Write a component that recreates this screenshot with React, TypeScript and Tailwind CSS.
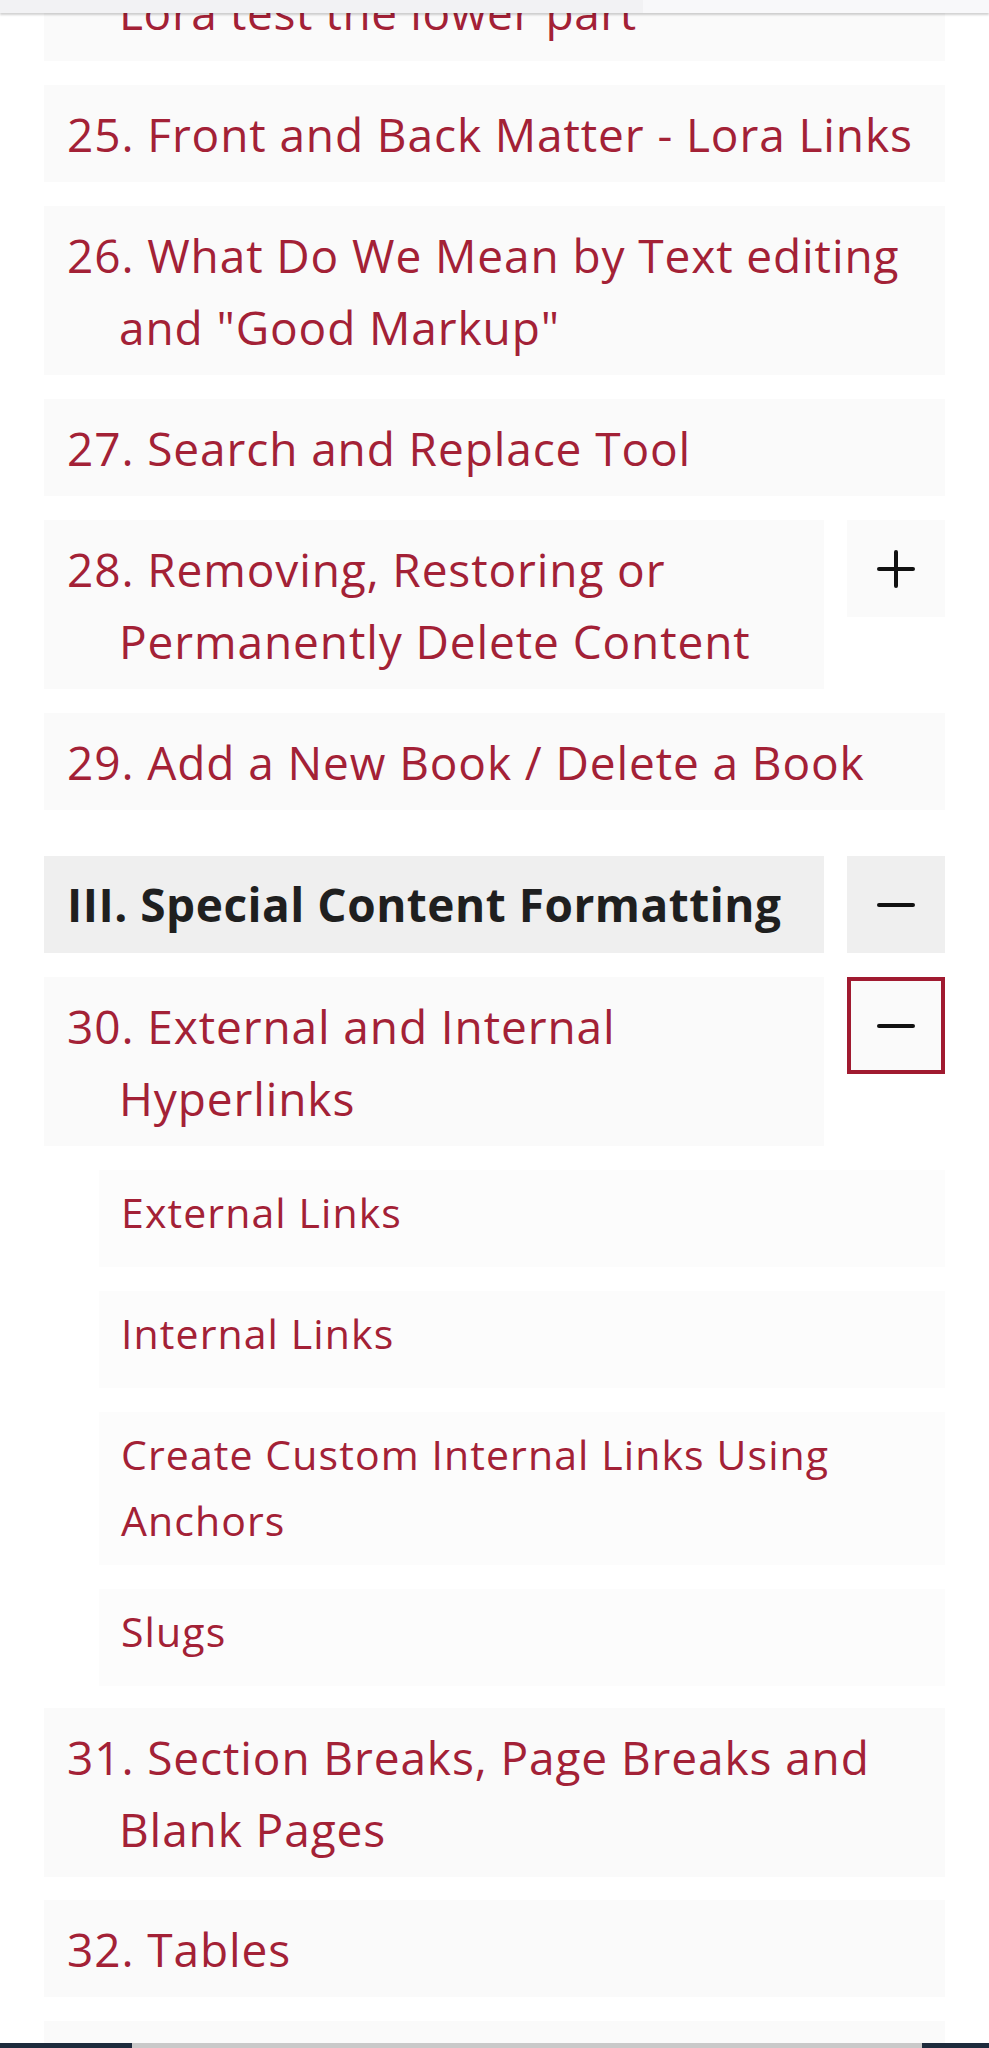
import React from 'react'

const red = 'text-[#a32136]'

function Toggle({ open, active }: { open: boolean; active?: boolean }) {
  return (
    <button
      className={`flex h-[97px] w-[98px] shrink-0 items-center justify-center ${
        active ? 'border-[4px] border-[#a01a30] bg-[#fafafa]' : open ? 'bg-[#efefef]' : 'bg-[#fafafa]'
      }`}
    >
      <svg width="38" height="38" viewBox="0 0 38 38" fill="none" stroke="#111" strokeWidth="4" strokeLinecap="round">
        <path d="M2 19h34" />
        {!open && <path d="M19 2v34" />}
      </svg>
    </button>
  )
}

function Lines({ lines }: { lines: string[] }) {
  return (
    <>
      {lines.map((l, i) => (
        <React.Fragment key={i}>
          {i > 0 && <br />}
          {l}
        </React.Fragment>
      ))}
    </>
  )
}

function Chapter({ lines, wide = true }: { lines: string[]; wide?: boolean }) {
  return (
    <div className={`bg-[#fafafa] pt-[13px] pb-[12px] pl-[75px] pr-[20px] ${wide ? 'w-full' : 'flex-1'}`}>
      <a className={`block [text-indent:-52px] text-[46px] leading-[72px] tracking-[0.9px] ${red}`}>
        <Lines lines={lines} />
      </a>
    </div>
  )
}

function Section({ lines }: { lines: string[] }) {
  return (
    <div className="ml-[55px] min-h-[97px] bg-[#fcfcfc] pt-[9px] pb-[12px] pl-[22px] pr-[20px]">
      <a className={`block text-[41px] leading-[66px] tracking-[1.1px] ${red}`}>
        <Lines lines={lines} />
      </a>
    </div>
  )
}

export default function App() {
  return (
    <div className="relative h-[2048px] overflow-hidden bg-white" style={{ fontFamily: '"Open Sans", "Liberation Sans", sans-serif' }}>
      {/* fixed bar at top */}
      <div className="absolute inset-x-0 top-0 z-10 flex h-[13px] shadow-[0_2px_2px_rgba(0,0,0,0.18)]">
        <div className="w-[643px] bg-[#f2f2f4]" />
        <div className="flex-1 bg-[#f8f8fa]" />
      </div>

      <div className="mx-[44px] flex flex-col gap-[24px]">
        <div className="h-[61px] overflow-hidden bg-[#fafafa] pl-[75px]">
          <div className={`-mt-[24px] whitespace-nowrap text-[46px] leading-[72px] tracking-[0.6px] ${red}`}>Lora test the lower part</div>
        </div>

        <Chapter lines={['25. Front and Back Matter - Lora Links']} />
        <Chapter lines={['26. What Do We Mean by Text editing', 'and "Good Markup"']} />
        <Chapter lines={['27. Search and Replace Tool']} />

        <div className="flex gap-[23px]">
          <Chapter wide={false} lines={['28. Removing, Restoring or', 'Permanently Delete Content']} />
          <Toggle open={false} />
        </div>

        <Chapter lines={['29. Add a New Book / Delete a Book']} />

        <div className="mt-[22px] flex gap-[23px]">
          <div className="flex h-[97px] flex-1 items-center bg-[#efefef] pl-[23px]">
            <span className="text-[46px] font-bold tracking-[0.5px] text-[#1f1f1f]">III. Special Content Formatting</span>
          </div>
          <Toggle open />
        </div>

        <div className="flex gap-[23px]">
          <Chapter wide={false} lines={['30. External and Internal', 'Hyperlinks']} />
          <Toggle open active />
        </div>

        <Section lines={['External Links']} />
        <Section lines={['Internal Links']} />
        <Section lines={['Create Custom Internal Links Using', 'Anchors']} />
        <Section lines={['Slugs']} />

        <div className="-mt-[2px]">
          <Chapter lines={['31. Section Breaks, Page Breaks and', 'Blank Pages']} />
        </div>
        <div className="-mt-[1px]">
          <Chapter lines={['32. Tables']} />
        </div>
        <div className="h-[120px] bg-[#fafafa]" />
      </div>

      {/* scrollbar at bottom */}
      <div className="absolute inset-x-0 bottom-0 flex h-[5px]">
        <div className="w-[132px] bg-[#1d2b3c]" />
        <div className="flex-1 bg-[#c9c9c9]" />
        <div className="w-[67px] bg-[#1d2b3c]" />
      </div>
    </div>
  )
}
